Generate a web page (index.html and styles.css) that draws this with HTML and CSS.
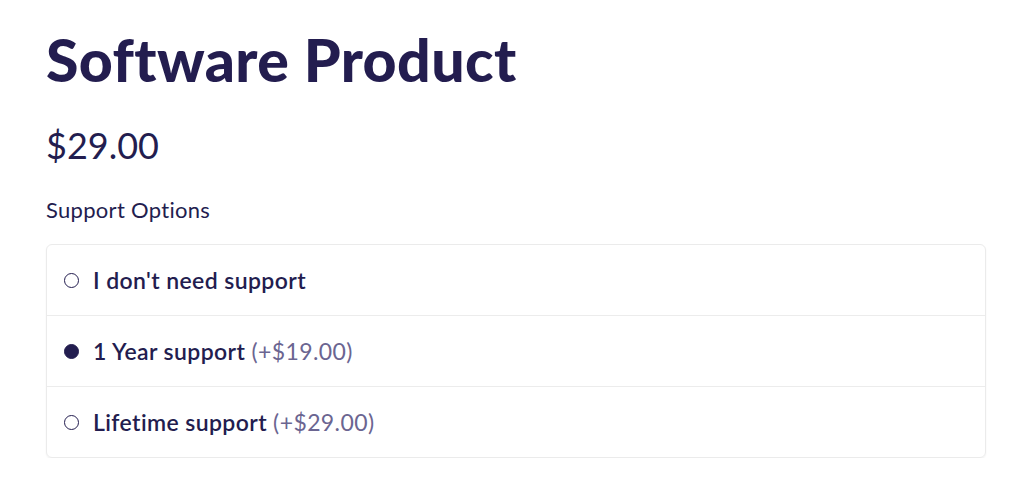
FILE: index.html
```html
<!DOCTYPE html>
<html>
<head>
<meta charset="utf-8">
<link rel="stylesheet" href="styles.css">
</head>
<body>
<div class="product">
  <h1 class="title">Software Product</h1>
  <p class="price">$29.00</p>
  <div class="label">Support Options</div>
  <div class="options">
    <label class="option">
      <span class="radio"></span>
      <span class="name">I don't need support</span>
    </label>
    <label class="option">
      <span class="radio checked"></span>
      <span class="name">1 Year support <span class="extra">(+$19.00)</span></span>
    </label>
    <label class="option">
      <span class="radio"></span>
      <span class="name">Lifetime support <span class="extra">(+$29.00)</span></span>
    </label>
  </div>
</div>
</body>
</html>
```
FILE: styles.css
```css
* { box-sizing: border-box; }
body {
  margin: 0;
  background: #fff;
  font-family: "Lato", "Noto Sans", sans-serif;
  color: #231d4f;
}
.product {
  padding: 24px 38px 0 46px;
}
.title {
  margin: 0;
  font-size: 59px;
  line-height: 72px;
  font-weight: 900;
  letter-spacing: 0.4px;
}
.price {
  margin: 27px 0 0;
  font-size: 36px;
  line-height: 44px;
  font-weight: 400;
}
.label {
  margin-top: 29px;
  font-size: 22px;
  line-height: 28px;
  font-weight: 400;
  letter-spacing: 0.3px;
}
.options {
  margin-top: 20px;
  border: 1px solid #ebebeb;
  border-radius: 6px;
  box-shadow: 0 1px 2px rgba(0,0,0,0.06);
  display: flex;
  flex-direction: column;
}
.option {
  height: 71px;
  display: flex;
  align-items: center;
  padding-left: 17px;
  gap: 14px;
  border-top: 1px solid #ececec;
}
.option:first-child { border-top: none; height: 70px; }
.radio {
  width: 15px;
  height: 15px;
  border-radius: 50%;
  border: 1.5px solid #231d4f;
  flex: none;
}
.radio.checked { background: #231d4f; }
.name {
  font-size: 23px;
  font-weight: 600;
  letter-spacing: 0.4px;
}
.extra {
  font-weight: 400;
  color: #6b6591;
}
```
